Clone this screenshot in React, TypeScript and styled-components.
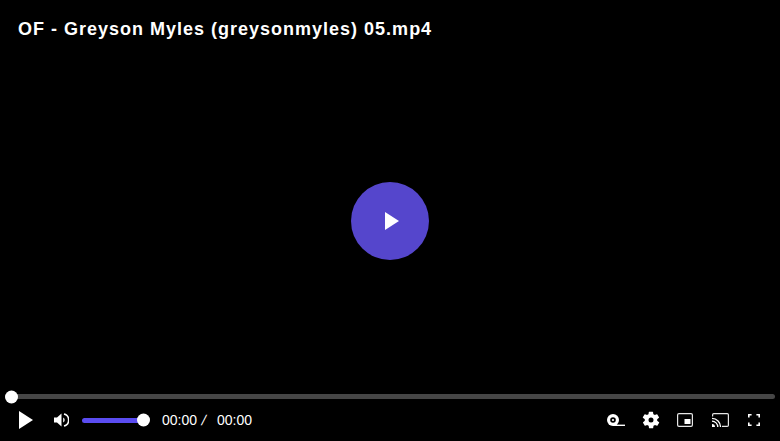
import React from 'react'
import styled, { createGlobalStyle } from 'styled-components'

const GlobalStyle = createGlobalStyle`
  html, body {
    margin: 0;
    padding: 0;
    background: #000;
    overflow: hidden;
  }
`

const Player = styled.main`
  width: 780px;
  height: 441px;
  background: #000;
  display: flex;
  flex-direction: column;
  font-family: 'Liberation Sans', Arial, sans-serif;
  color: #fff;
`

const Title = styled.h1`
  margin: 0;
  padding: 18px 18px 0;
  height: 22px;
  line-height: 22px;
  font-size: 18px;
  font-weight: 700;
  letter-spacing: 1px;
`

const Stage = styled.div`
  flex: 1;
  display: flex;
  align-items: center;
  justify-content: center;
  padding-top: 8px;
`

const BigPlay = styled.button`
  width: 78px;
  height: 78px;
  padding: 0 0 0 4px;
  border: 0;
  border-radius: 50%;
  background: #5546cc;
  display: flex;
  align-items: center;
  justify-content: center;
`

const Progress = styled.div`
  height: 5px;
  margin: 0 5px 0 6px;
  border-radius: 3px;
  background: #464646;
  position: relative;
`

const Thumb = styled.span<{ $size: number }>`
  position: absolute;
  top: 50%;
  width: ${(p) => p.$size}px;
  height: ${(p) => p.$size}px;
  border-radius: 50%;
  background: #fff;
  transform: translateY(-50%);
`

const ProgressThumb = styled(Thumb)`
  left: -1px;
`

const VolumeThumb = styled(Thumb)`
  right: -6px;
`

const Controls = styled.div`
  height: 42px;
  padding: 0 10px 0 16px;
  display: flex;
  align-items: center;
  justify-content: space-between;
`

const Group = styled.div`
  display: flex;
  align-items: center;
`

const IconButton = styled.span<{ $width: number }>`
  width: ${(p) => p.$width}px;
  height: 24px;
  display: flex;
  align-items: center;
  justify-content: center;
`

const MuteButton = styled(IconButton)`
  margin: 0 4px 0 8px;
`

const VolumeBar = styled.div`
  width: 62px;
  height: 5px;
  margin: 0 18px 0 0;
  border-radius: 3px;
  background: #5a4cf0;
  position: relative;
`

const Time = styled.span`
  font-size: 14px;
  line-height: 20px;
`

const Slash = styled.span`
  display: inline-block;
  margin: 0 11px 0 5px;
  font-size: 14px;
  line-height: 20px;
  transform: skewX(-14deg);
`

export default function App() {
  return (
    <Player>
      <GlobalStyle />
      <Title>OF - Greyson Myles (greysonmyles) 05.mp4</Title>
      <Stage>
        <BigPlay aria-label='Play'>
          <svg width='14' height='18' viewBox='0 0 14 18'>
            <path d='M0 0 L14 9 L0 18 Z' fill='#fff' />
          </svg>
        </BigPlay>
      </Stage>
      <Progress>
        <ProgressThumb $size={13} />
      </Progress>
      <Controls>
        <Group>
          <IconButton $width={20}>
            <svg width='14' height='18' viewBox='0 0 14 18'>
              <path d='M0 0 L14 9 L0 18 Z' fill='#fff' />
            </svg>
          </IconButton>
          <MuteButton $width={34}>
            <svg width='15' height='14' viewBox='0 0 15 14' fill='none'>
              <path d='M0 4.5 H3 L7.5 0.5 V13.5 L3 9.5 H0 Z' fill='#fff' />
              <path d='M9.2 4.4 A3 3 0 0 1 9.2 9.6 Z' fill='#fff' />
              <path d='M10 1 A6.2 6.2 0 0 1 10 13' stroke='#fff' strokeWidth='1.5' />
            </svg>
          </MuteButton>
          <VolumeBar>
            <VolumeThumb $size={13} />
          </VolumeBar>
          <Time>00:00</Time>
          <Slash>/</Slash>
          <Time>00:00</Time>
        </Group>
        <Group>
          <IconButton $width={36}>
            <svg width='18' height='12' viewBox='0 0 18 12' fill='none'>
              <circle cx='6' cy='6' r='6' fill='#fff' />
              <circle cx='6' cy='6' r='2.8' fill='#000' />
              <circle cx='6' cy='6' r='1.1' fill='#fff' />
              <path d='M6 10.6 H18 V12 H6 Z' fill='#fff' />
            </svg>
          </IconButton>
          <IconButton $width={34}>
            <svg width='20' height='20' viewBox='0 0 24 24'>
              <path
                fill='#fff'
                d='M19.4 13a7.6 7.6 0 0 0 0-2l2.1-1.6a.5.5 0 0 0 .1-.6l-2-3.5a.5.5 0 0 0-.6-.2l-2.5 1a7.3 7.3 0 0 0-1.7-1l-.4-2.6a.5.5 0 0 0-.5-.4h-4a.5.5 0 0 0-.5.4l-.4 2.6a7.3 7.3 0 0 0-1.7 1l-2.5-1a.5.5 0 0 0-.6.2l-2 3.5a.5.5 0 0 0 .1.6L4.6 11a7.6 7.6 0 0 0 0 2l-2.1 1.6a.5.5 0 0 0-.1.6l2 3.5a.5.5 0 0 0 .6.2l2.5-1a7.3 7.3 0 0 0 1.7 1l.4 2.6a.5.5 0 0 0 .5.4h4a.5.5 0 0 0 .5-.4l.4-2.6a7.3 7.3 0 0 0 1.7-1l2.5 1a.5.5 0 0 0 .6-.2l2-3.5a.5.5 0 0 0-.1-.6ZM12 15a3 3 0 1 1 0-6 3 3 0 0 1 0 6Z'
              />
            </svg>
          </IconButton>
          <IconButton $width={34}>
            <svg width='16' height='14' viewBox='0 0 16 14' fill='none'>
              <rect x='0.6' y='0.6' width='14.8' height='12.8' rx='1.4' stroke='#e6e6e6' strokeWidth='1.2' />
              <rect x='7.5' y='6' width='6' height='5' fill='#fff' />
            </svg>
          </IconButton>
          <IconButton $width={36}>
            <svg width='17' height='14' viewBox='0 0 17 14' fill='none'>
              <path d='M0.6 3.5 V1.8 A1.2 1.2 0 0 1 1.8 0.6 H15.2 A1.2 1.2 0 0 1 16.4 1.8 V12.2 A1.2 1.2 0 0 1 15.2 13.4 H10' stroke='#e6e6e6' strokeWidth='1.2' />
              <path d='M0 5.4 A8.6 8.6 0 0 1 8.6 14' stroke='#fff' strokeWidth='1.3' />
              <path d='M0 8.2 A5.8 5.8 0 0 1 5.8 14' stroke='#fff' strokeWidth='1.3' />
              <path d='M0 11 A3 3 0 0 1 3 14 H0 Z' fill='#fff' />
            </svg>
          </IconButton>
          <IconButton $width={32}>
            <svg width='12' height='12' viewBox='0 0 12 12' fill='none'>
              <path d='M0.8 3.6 V0.8 H3.6 M8.4 0.8 H11.2 V3.6 M11.2 8.4 V11.2 H8.4 M3.6 11.2 H0.8 V8.4' stroke='#fff' strokeWidth='1.6' />
            </svg>
          </IconButton>
        </Group>
      </Controls>
    </Player>
  )
}
